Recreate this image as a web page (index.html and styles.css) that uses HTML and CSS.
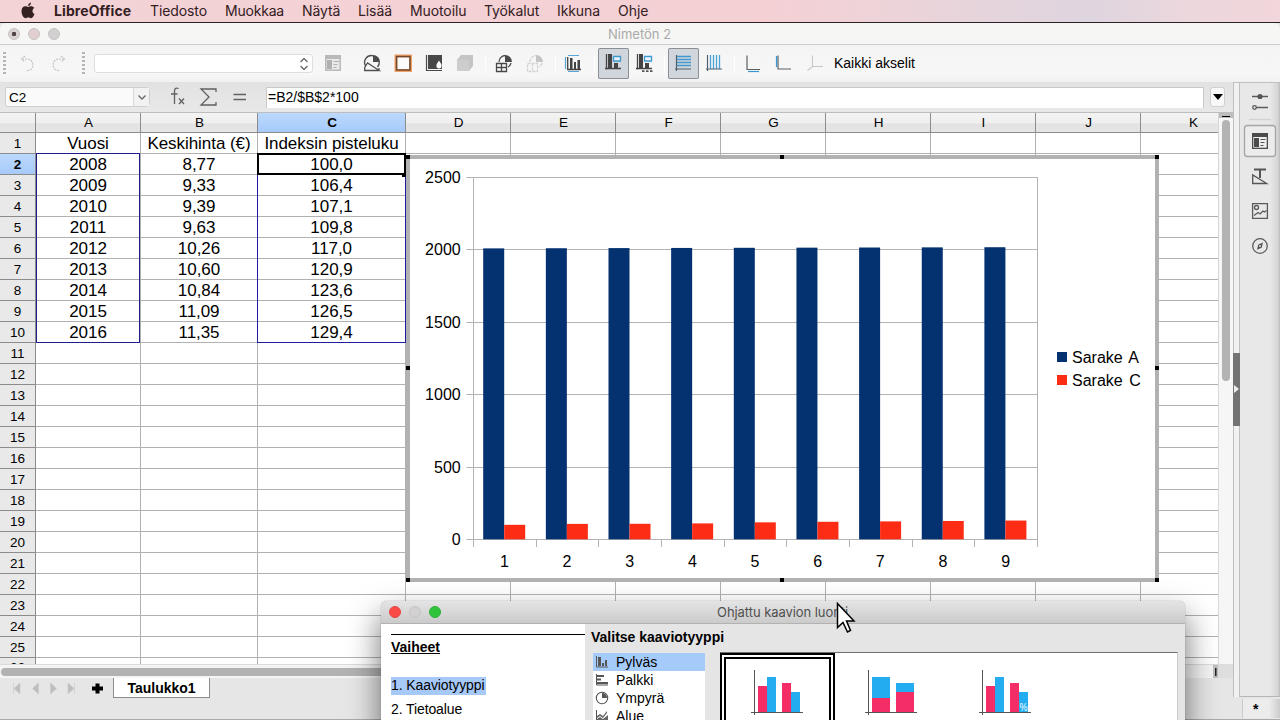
FILE: index.html
```html
<!DOCTYPE html>
<html lang="fi">
<head>
<meta charset="utf-8">
<title>Nimetön 2</title>
<link rel="stylesheet" href="styles.css">
</head>
<body>
<div class="screen">
  <nav class="menubar">
    <svg class="apple" width="14" height="17" viewBox="0 0 14 17"><path d="M10 .5C8.300.7 6.900 2.300 7.100 4 8.800 4 10.100 2.300 10 .5ZM7.200 5C6.400 5 5.500 4.300 4.400 4.300 2.200 4.300.5 6.200.5 9.200c0 3.300 2.100 7 4 7 1 0 1.500-.6 2.800-.6s1.700.6 2.700.6c1.600 0 2.900-2.400 3.500-4.100-2.600-1.200-2.600-4.800-.2-6.100C12.500 4.900 11.200 4.300 10.100 4.300 8.900 4.300 8 5 7.200 5Z"/></svg>
    <span class="m m-app">LibreOffice</span><span class="m m-file">Tiedosto</span><span class="m m-edit">Muokkaa</span><span class="m m-view">Näytä</span><span class="m m-insert">Lisää</span><span class="m m-format">Muotoilu</span><span class="m m-tools">Työkalut</span><span class="m m-window">Ikkuna</span><span class="m">Ohje</span>
  </nav>
  <header class="titlebar"><i class="light edited"></i><i class="light rosy"></i><i class="light"></i><span class="wtitle">Nimetön 2</span></header>

  <div class="toolbar">
    <i class="grip first"></i>
    <svg class="ic undo" width="31" height="31" viewBox="0 0 31 31"><path d="M10 11h6a6 6 0 0 1 2 11l-4 1M13 8l-3.500 3 3.500 3" fill="none" stroke="#c3c3c3" stroke-width="1.200" stroke-dasharray="2 1"/></svg>
    <svg class="ic" width="31" height="31" viewBox="0 0 31 31"><path d="M21 11h-6a6 6 0 0 0-2 11l4 1M18 8l3.500 3-3.500 3" fill="none" stroke="#c3c3c3" stroke-width="1.200" stroke-dasharray="2 1"/></svg>
    <i class="grip second"></i>
    <div class="combo"><svg width="10" height="14" viewBox="0 0 10 14"><path d="M1.500 5 5 1.500 8.500 5M1.500 9 5 12.500 8.500 9" fill="none" stroke="#6b6b6b" stroke-width="1.400"/></svg></div>
    <svg class="ic" width="31" height="31" viewBox="0 0 31 31"><path d="M7 7h16v16H7z" fill="#b9b9b9"/><path d="M8.500 11h13v10.500h-13z" fill="#e9e9e9"/><path d="M9 12h5v9H9z" fill="#b0b0b0"/><path d="M15.500 13.500h6M15.500 16.500h4M15.500 19.500h3" stroke="#b0b0b0"/></svg>
    <i class="gap"></i>
    <svg class="ic" width="31" height="31" viewBox="0 0 31 31"><path d="M8.700 18A6.800 6.800 0 0 1 16 7.700M22.300 14a6.800 6.800 0 0 1-1.800 5" fill="none" stroke="#505050" stroke-width="1.400"/><path d="M16 7a7 7 0 0 1 7 7h-7z" fill="#4a4a4a"/><path d="M10.500 15 7.700 19.500v3h14.500zM22 20v2.500" fill="none" stroke="#505050" stroke-width="1.300"/></svg>
    <svg class="ic" width="31" height="31" viewBox="0 0 31 31"><path d="M8 8h14.500v14.500H8z" fill="#fbfbfb" stroke="#f2a167" stroke-width="3"/><path d="M8.500 8.500h13.500v13.500h-13.500z" fill="none" stroke="#6f4b35" stroke-width="1.500"/></svg>
    <svg class="ic" width="31" height="31" viewBox="0 0 31 31"><path d="M7.500 7v15.500H23" fill="none" stroke="#484848" stroke-width="1.200"/><path d="M9 7h14v14H9z" fill="#484848"/><path d="M20 12.500c2 3 2.600 4 2.600 5.300a2.600 2.600 0 0 1-5.200 0C17.400 16.500 18 15.500 20 12.500Z" fill="#fff"/></svg>
    <svg class="ic" width="31" height="31" viewBox="0 0 31 31"><path d="M7 12l4-5h12v11l-4 5H7z" fill="#c4c4c4"/><path d="M7 11.500h12V23H7z" fill="#cdcdcd"/></svg>
    <i class="sep"></i>
    <svg class="ic" width="31" height="31" viewBox="0 0 31 31"><path d="M10 14a6.500 6.500 0 0 1 6-6.500M22 15a6.500 6.500 0 0 1-3 4" fill="none" stroke="#4a4a4a" stroke-width="1.300"/><path d="M16 7a7 7 0 0 1 7 7h-7z" fill="#484848"/><path d="M7.500 15.500h10v8h-10zM7.500 19.500h10M12.500 15.500v8" fill="#fafafa" stroke="#484848" stroke-width="1.300"/></svg>
    <svg class="ic" width="31" height="31" viewBox="0 0 31 31"><path d="M10 14a6.500 6.500 0 0 1 6-6.500M22 15a6.500 6.500 0 0 1-3 4M7.500 15.500h10v8h-10zM12.500 15.500v8" fill="none" stroke="#d3d3d3" stroke-width="1.300" stroke-dasharray="3 1"/><path d="M16 7a7 7 0 0 1 7 7h-7z" fill="#c4c4c4"/></svg>
    <i class="sep"></i>
    <svg class="ic" width="31" height="31" viewBox="0 0 31 31"><path d="M9 7.500h11M6.500 9v12M9 23.500h11" stroke="#59a5d4" stroke-width="1.200"/><path d="M8.700 9v12.500H22" fill="none" stroke="#444" stroke-width="1.300"/><path d="M11 10h2.500v11H11zM15 14h2v7h-2zM18.500 12H21v9h-2.500z" fill="#444"/></svg>
    <i class="sep"></i>
    <svg class="ic on" width="31" height="31" viewBox="0 0 31 31"><path d="M8.500 6v15.500M7 20.500h16" stroke="#444" stroke-width="1.300"/><path d="M10 6h4v14h-4zM16 15h4v5h-4z" fill="#444"/><path d="M15.500 8.500h7v4.500h-7z" fill="#e7f1f8" stroke="#3f99d0" stroke-width="1.300"/></svg>
    <svg class="ic" width="31" height="31" viewBox="0 0 31 31"><path d="M8.500 6v15.500M7 20.500h16" stroke="#444" stroke-width="1.300"/><path d="M10 6h4v14h-4zM16 15h4v5h-4z" fill="#444"/><path d="M15.500 8.500h7v4.500h-7z" fill="#eef6fb" stroke="#3f99d0" stroke-width="1.300"/><path d="M13 23.200h11" stroke="#555" stroke-width="1.800" stroke-dasharray="2.500 1.500"/></svg>
    <i class="sep"></i>
    <svg class="ic on" width="31" height="31" viewBox="0 0 31 31"><path d="M8 8.500h15M8 11.500h15M8 14.500h15M8 17.500h15" stroke="#4299d0" stroke-width="1.300"/><path d="M8.500 7v16M7 21h16" stroke="#51606b" stroke-width="1.200"/></svg>
    <svg class="ic" width="31" height="31" viewBox="0 0 31 31"><path d="M11.500 7v14M14.500 7v14M17.500 7v14M20.500 7v14" stroke="#4aa3d8" stroke-width="1.300"/><path d="M8.500 7v16M7 21h16" stroke="#51606b" stroke-width="1.200"/></svg>
    <i class="sep"></i>
    <svg class="ic" width="31" height="31" viewBox="0 0 31 31"><path d="M9 7.500v14H22" fill="none" stroke="#5b6267" stroke-width="1.200"/><path d="M10 23.500h11" stroke="#3c97d0" stroke-width="1.200"/></svg>
    <svg class="ic" width="31" height="31" viewBox="0 0 31 31"><path d="M9 7.500v13.500H22" fill="none" stroke="#5b6267" stroke-width="1.200"/><path d="M7.500 8v11" stroke="#3c97d0" stroke-width="1.200"/></svg>
    <svg class="ic" width="31" height="31" viewBox="0 0 31 31"><path d="M12.500 7.500V18.500H23M12.500 18.500l-5 4" fill="none" stroke="#c8c8c8" stroke-width="1.100"/></svg>
    <span class="axes">Kaikki akselit</span>
  </div>

  <div class="main">
    <section class="doc">
      <div class="formulabar">
        <div class="namebox"><span>C2</span><b><svg width="10" height="7" viewBox="0 0 10 7"><path d="M1.500 1.500 5 5l3.500-3.500" fill="none" stroke="#666" stroke-width="1.300"/></svg></b></div>
        <svg class="fxicons" width="78" height="22" viewBox="0 0 78 22"><path d="M8.500 2.500c-3-1-4 0-4 3V18M1 8h6.500M9 12.500l5 5.500M14 12.500 9 18" fill="none" stroke="#606060" stroke-width="1.300"/><path d="M46 6V3H31l8 8-8 8h15v-3" fill="none" stroke="#606060" stroke-width="1.300"/><path d="M63.500 8.500h12.500M63.500 13.500h12.500" stroke="#606060" stroke-width="1.400"/></svg>
        <div class="formula">=B2/$B$2*100</div>
        <div class="drop"><i></i></div>
      </div>
      <div class="sheetrow">
        <div class="sheet" id="sheet">
          <i class="range ra"></i><i class="range rc"></i><i class="active"><b></b></i>
          <svg class="chart" id="chart" width="753" height="427" viewBox="406 155 753 427"></svg>
        </div>
        <div class="vscroll"><i class="split"></i><i class="thumb"></i></div>
      </div>
      <div class="hscroll"><i class="hthumb"></i><i class="hsplit"></i></div>
      <div class="tabs">
        <svg width="100" height="20" viewBox="0 0 100 20"><path d="M13.500 5v11M38.500 5v11l-6-5.500zM50.500 5v11l6-5.500zM74.500 5v11M20 5v11l-6-5.500zM68 5v11l6-5.500z" fill="#bebebe" stroke="#cacaca" stroke-width=".7"/><path d="M97.500 5.500v10M92 10.500h11" stroke="#000" stroke-width="4"/></svg>
        <span class="tab">Taulukko1</span>
      </div>
    </section>
    <div class="divider"><i><b></b></i></div>
    <aside class="sidebar">
      <svg width="38" height="190" viewBox="1241 82 38 190">
        <g fill="none" stroke="#5b5b5b" stroke-width="1.300"><path d="M1252 96.500h16M1256 107.500h12"/><circle cx="1254.500" cy="107.500" r="1.800"/><path d="M1249 119.500h22" stroke="#d2d2d2"/>
        <rect x="1244.500" y="125.500" width="31" height="31" rx="3" fill="#ececec" stroke="#a5a5a5"/></g>
        <circle cx="1260" cy="96.500" r="2.600" fill="#555"/>
        <path d="M1252 133h16v16h-16z" fill="#4c4c4c"/><path d="M1253.300 137h13.400v10.700h-13.400z" fill="#efefef"/><path d="M1254 138h5v9h-5z" fill="#4c4c4c"/><path d="M1260.500 139.500h5M1260.500 142.500h4M1260.500 145.500h3" stroke="#555"/>
        <path d="M1254 169.500h12M1260 169v9" stroke="#555" stroke-width="2"/><path d="M1252.700 175v8.500h14z" fill="none" stroke="#555" stroke-width="1.300"/>
        <g fill="none" stroke="#5b5b5b" stroke-width="1.300"><path d="M1252.600 203.600h14.800v14.800h-14.800z"/><circle cx="1256.500" cy="207.500" r="2"/><path d="M1254 215.500l4-3 2 1.500 3-3 1.500 1 2-1.500"/><circle cx="1260" cy="246" r="7.300"/></g><path d="M1263 242.500l-1.300 5.200-4.700 2 1.300-5.200z" fill="#555"/><circle cx="1260" cy="246" r=".9" fill="#eee"/>
      </svg>
    </aside>
  </div>
  <footer class="status"><span>*</span></footer>

  <div class="dialog">
    <div class="dtitle"><i class="light red"></i><i class="light"></i><i class="light green"></i><span>Ohjattu kaavion luonti</span></div>
    <div class="dbody">
      <div class="steps"><h2>Vaiheet</h2><p class="cur"><span>1. Kaaviotyyppi</span></p><p>2. Tietoalue</p></div>
      <div class="pick">
        <h3>Valitse kaaviotyyppi</h3>
        <div class="cols">
          <ul class="types">
            <li class="sel"><svg width="14" height="14" viewBox="0 0 14 14"><path d="M1.500 1v11H13" fill="none" stroke="#555"/><path d="M3 2h3v9H3zM7 8h2v3H7zM10 5h2v6h-2z" fill="#555"/></svg>Pylväs</li>
            <li><svg width="14" height="14" viewBox="0 0 14 14"><path d="M1.500 1v11H13" fill="none" stroke="#555"/><path d="M2 2h7v2H2zM2 5.500h4v2H2zM2 9h11v2H2z" fill="#555"/></svg>Palkki</li>
            <li><svg width="14" height="14" viewBox="0 0 14 14"><circle cx="7" cy="7" r="5.700" fill="none" stroke="#555" stroke-width="1.100"/><path d="M7 2v5h5a5 5 0 0 0-5-5z" fill="#555"/></svg>Ympyrä</li>
            <li><svg width="14" height="14" viewBox="0 0 14 14"><path d="M1.500 1v12" stroke="#555"/><path d="M2 7l3-2 3 2 4-5v2L8 9 5 7 2 9zM2 10l3-2 3 2 5-4v7H2z" fill="#666"/></svg>Alue</li>
          </ul>
          <div class="subtypes">
            <div class="sub chosen"><svg width="50" height="50" viewBox="0 0 50 50"><path d="M4 19h9v26H4zM28 16h9v29h-9z" fill="#f52d66"/><path d="M13 10h9v35h-9zM37 25h9v20h-9z" fill="#23adf0"/><path d="M.5 3v45M-3 45.500h52" stroke="#555" fill="none"/></svg></div>
            <div class="sub"><svg width="50" height="50" viewBox="0 0 50 50"><path d="M4 31h18v14H4zM28 25h18v20H28z" fill="#f52d66"/><path d="M4 10h18v21H4zM28 16h18v9H28z" fill="#23adf0"/><path d="M.5 3v45M-3 45.500h52" stroke="#555" fill="none"/></svg></div>
            <div class="sub"><svg width="50" height="50" viewBox="0 0 50 50"><path d="M4 19h9v26H4zM28 16h9v29h-9z" fill="#f52d66"/><path d="M13 10h9v35h-9zM37 25h9v20h-9z" fill="#23adf0"/><path d="M.5 3v45M-3 45.500h52" stroke="#555" fill="none"/><text x="37.500" y="44" font-size="11" fill="#fff" textLength="8" lengthAdjust="spacingAndGlyphs">%</text></svg></div>
          </div>
        </div>
      </div>
    </div>
  </div>
  <svg class="cursor" width="20" height="33" viewBox="0 0 20 33"><path d="M1.500 1.500v24l5.500-5 4.500 9.500 3-1.500L10.500 19H18z" fill="#fff" stroke="#000" stroke-width="1.500"/></svg>
</div>
<script src="script.js"></script>
</body>
</html>
```
FILE: styles.css
```css
* { box-sizing: border-box; }
body { margin: 0; font-family: "Liberation Sans", Arial, sans-serif; color: #000; }
i, b { font-style: normal; display: block; }
.screen { position: relative; width: 1280px; height: 720px; overflow: hidden; background: #e6e6e6; display: flex; flex-direction: column; }

.menubar { height: 23px; flex: none; display: flex; align-items: center; padding-bottom: 1px; border-bottom: 1px solid #2b2024; background: linear-gradient(90deg, #f3d3d6 0, #f4d0d4 60%, #eed3d8 68%, #ded5df 85%, #ecd7dc 93%, #f1d6db 100%); font: 14px Inter, sans-serif; color: #33201f; }
.apple { margin: -1px 19px 0 21px; fill: #33201f; }
.m { white-space: nowrap; flex: none; }
.m-app { width: 96px; font-weight: 700; letter-spacing: .1px; }
.m-file { width: 75px; letter-spacing: -.1px; }
.m-edit { width: 77px; letter-spacing: -.2px; }
.m-view { width: 56px; letter-spacing: -.1px; }
.m-insert { width: 52px; letter-spacing: -.1px; }
.m-format { width: 74px; letter-spacing: -.1px; }
.m-tools { width: 73px; letter-spacing: -.1px; }
.m-window { width: 61px; letter-spacing: -.1px; }

.titlebar { height: 22px; flex: none; display: flex; align-items: center; gap: 8px; padding-left: 8px; background: #f6f6f5; border-bottom: 1px solid #cdcdcd; border-radius: 6px 6px 0 0; }
.light { width: 12px; height: 12px; border-radius: 50%; background: #d2d0d0; border: 1px solid #c6c4c4; flex: none; }
.rosy { background: #e2cfcf; }
.edited { background: radial-gradient(circle, #4e4747 0 2px, #dcd2d2 2.500px); }
.wtitle { margin-left: 540px; font: 13px Inter, sans-serif; color: #aaa; }

.toolbar { height: 37px; flex: none; display: flex; align-items: center; background: linear-gradient(#f4f4f4, #f7f7f7 80%, #f1f1f1); }
.grip { width: 3px; height: 23px; background: repeating-linear-gradient(#b5b5b5 0 2.500px, transparent 2.500px 4px); flex: none; }
.first { margin: 0 6px 0 3px; }
.second { margin: 0 9px 0 8px; }
.ic { flex: none; }
.on { background: #d1d5dc; box-shadow: inset 0 0 0 1px #8b8f95; border-radius: 2px; }
.combo { width: 219px; height: 19px; margin-right: 5px; background: #fff; border: 1px solid #dedede; border-radius: 3px; display: flex; align-items: center; justify-content: flex-end; padding-right: 3px; flex: none; }
.gap, .sep { width: 8px; height: 16px; flex: none; }
.sep { background: linear-gradient(#fff, #fff) 4px 0 / 1px 100% no-repeat; }
.axes { margin-left: 3px; font-size: 14px; letter-spacing: 0; white-space: nowrap; margin-top: -1px; }

.main { height: 616px; flex: none; display: flex; }
.doc { width: 1233px; flex: none; display: flex; flex-direction: column; }
.formulabar { height: 31px; flex: none; display: flex; align-items: center; background: linear-gradient(#e2e2e2, #e8e8e8); border-bottom: 1px solid #bdbdbd; }
.namebox { margin-left: 5px; width: 145px; height: 20px; background: #fafafa; border: 1px solid #cfcfcf; border-radius: 2px 4px 4px 2px; display: flex; justify-content: space-between; font-size: 13.500px; line-height: 19px; padding-left: 3px; }
.namebox b { width: 16px; height: 18px; background: #f2f2f2; border-left: 1px solid #d9d9d9; display: flex; align-items: center; justify-content: center; }
.fxicons { margin-left: 20px; }
.formula { margin-left: 18px; width: 938px; height: 21px; background: #fff; border: 1px solid #c9c9c9; border-width: 1px 1px 0 1px; font-size: 14px; letter-spacing: 0; line-height: 19px; padding-left: 1px; margin-top: 1px; }
.drop { margin-left: 6px; width: 15px; height: 20px; background: #f8f8f8; border: 1px solid #d0d0d0; border-radius: 3px; display: flex; align-items: center; justify-content: center; }
.drop i { flex: none; border: 5px solid transparent; border-top: 6px solid #000; border-bottom: 0; }

.sheetrow { height: 551px; flex: none; display: flex; }
.sheet { position: relative; width: 1218px; height: 551px; overflow: hidden; background: #fff; }
.row { display: grid; grid-template-columns: 36px 105px 117px 148px repeat(7, 105px) 105px; height: 21px; }
.row > span { border: 0 solid #b1b1b1; border-width: 0 1px 1px 0; text-align: center; font-size: 17px; line-height: 21px; letter-spacing: -.05px; white-space: nowrap; overflow: hidden; }
.row > span.hd { font-size: 13.500px; line-height: 21px; background: #e9e9e9; border-color: #8c8c8c; letter-spacing: 0; }
.row:nth-child(27) > span.hd { line-height: 19px; }
.row.head { height: 20px; }
.row.head > span.hd { padding-left: 1px; line-height: 20px; background: linear-gradient(#f3f3f3, #efefef 50%, #e2e2e2 60%, #e6e6e6); }
.row > span.hl, .row.head > span.hl { font-weight: 700; background: linear-gradient(#bcd9fc, #a6cafa); }
.range { position: absolute; top: 40px; height: 190px; border: 1px solid #1f1c8b; }
.ra { left: 36px; width: 104px; }
.rc { left: 257px; width: 149px; border-color: #1f1ca0; }
.active { position: absolute; left: 257px; top: 40px; width: 149px; height: 22px; border: 2px solid #000; }
.active b { position: absolute; right: -2px; bottom: -4px; width: 4px; height: 4px; background: #000; }
.chart { position: absolute; left: 406px; top: 42px; }
.vscroll { width: 15px; background: #f6f6f6; border-left: 1px solid #d8d8d8; display: flex; flex-direction: column; align-items: center; }
.split { width: 14px; height: 5px; background: #bdbdbd; border-bottom: 0; display: flex; }
.split::after { content: ""; width: 8px; height: 1px; margin: 3px 3px; background: #000; }
.thumb { margin-top: 2px; width: 8px; height: 261px; border-radius: 4px; background: #b3b3b3; }

.hscroll { height: 14px; flex: none; background: linear-gradient(90deg, #f4f4f4 1218px, #dedede 1218px); display: flex; align-items: center; justify-content: space-between; padding: 0 15px 0 1px; border-top: 1px solid #dcdcdc; }
.hthumb { width: 1180px; height: 8px; margin-top: 0; border-radius: 4px; background: #b2b2b2; }
.hsplit { width: 5px; height: 14px; background: linear-gradient(#222, #222) 2px 3px / 1.500px 8px no-repeat #bdbdbd; }
.tabs { height: 21px; flex: none; display: flex; border-bottom: 1px solid #b5b5b5; background: #e6e6e6; }
.tabs svg { overflow: visible; }
.tab { margin-left: 13px; width: 97px; height: 20px; background: #fff; border: 1px solid #8d8d8d; border-top: 0; text-align: center; font-weight: 700; font-size: 14px; letter-spacing: 0; line-height: 20px; }

.divider { width: 7px; height: 615px; background: #f1f1f1; border: 1px solid #c0c0c0; border-width: 1px 1px 0 1px; flex: none; }
.divider i { margin: 270px 0 0 -1px; width: 7px; height: 73px; background: #737373; padding: 32px 0 0 1px; }
.divider b { border: 4px solid transparent; border-left: 5px solid #eee; border-right: 0; width: 0; height: 0; }
.sidebar { flex: 1; height: 615px; padding-left: 1px; border-top: 1px solid #c0c0c0; border-bottom: 1px solid #b5b5b5; background: linear-gradient(90deg, #e8e8e8 75%, #d6d6d6 94%, #bcbcbc); }
.sidebar svg { display: block; margin-top: -1px; }
.status { flex: 1; display: flex; justify-content: flex-end; background: #e6e6e6; border-bottom: 1px solid #aaa; }
.status span { width: 38px; height: 19px; margin-top: 1px; border-left: 1px solid #c9c9c9; padding-left: 10px; font-size: 14px; font-weight: 700; line-height: 20px; background: linear-gradient(90deg, #ececec 70%, #ccc); }

.dialog { position: absolute; left: 381px; top: 601px; width: 804px; height: 130px; border-radius: 6px 6px 0 0; background: #e5e5e5; overflow: visible; box-shadow: 0 16px 30px 2px rgba(0, 0, 0, .5), 0 0 1px rgba(0, 0, 0, .5); }
.dtitle { height: 23px; border-radius: 6px 6px 0 0; background: linear-gradient(#e4e4e4, #cbcbcb); border-bottom: 1px solid #b2b2b2; display: flex; align-items: center; gap: 8px; padding-left: 8px; }
.dtitle span { margin-left: 268px; font: 13px Inter, sans-serif; letter-spacing: -.06px; color: #505050; white-space: nowrap; }
.light.red { background: #fb4b47; border-color: #ea4542; }
.light.green { background: #30c43b; border-color: #2bb234; }
.dbody { display: flex; height: 107px; }
.steps { width: 204px; padding: 10px 0 0 10px; background: #fff; flex: none; font-size: 14px; }
.steps h2 { margin: 0; border-top: 1px solid #000; padding-top: 4px; height: 43px; font-size: 14px; letter-spacing: 0; line-height: 16px; text-decoration: underline; }
.steps p { margin: 0 0 6px; height: 18px; line-height: 17px; letter-spacing: -.1px; }
.cur span { display: inline-block; height: 18px; background: #a7c9f7; width: 95px; }
.pick { flex: 1; padding: 5px 7px 0 6px; }
.pick h3 { margin: 0; font-size: 14px; line-height: 16px; height: 23px; letter-spacing: 0; }
.cols { display: flex; padding-left: 2px; }
.types { margin: 1px 15px 0 0; padding: 0; width: 112px; height: 90px; background: #fff; list-style: none; font-size: 14px; }
.types li { height: 18px; line-height: 19px; display: flex; align-items: center; padding-left: 2px; gap: 7px; }
.types .sel { background: #a5cbfb; }
.subtypes { width: 458px; height: 90px; display: flex; background: #fff; border: 1px solid #707070; border-width: 1px 1px 0 0; border-right-color: #ccc; }
.sub { width: 114px; height: 90px; padding: 14px 0 0 33px; }
.sub svg { display: block; overflow: visible; }
.chosen { border: 6px double #000; width: 115px; padding: 8px 0 0 28px; }
.cursor { position: absolute; left: 836px; top: 602px; }
```
FILE: script.js
```js
const data = [
  ['Vuosi', 'Keskihinta (€)', 'Indeksin pisteluku'],
  ['2008', '8,77', '100,0'], ['2009', '9,33', '106,4'], ['2010', '9,39', '107,1'],
  ['2011', '9,63', '109,8'], ['2012', '10,26', '117,0'], ['2013', '10,60', '120,9'],
  ['2014', '10,84', '123,6'], ['2015', '11,09', '126,5'], ['2016', '11,35', '129,4']
];
let rows = '<div class="row head"><span class="hd"></span>';
for (const c of 'ABCDEFGHIJK') rows += `<span class="hd${c === 'C' ? ' hl' : ''}">${c}</span>`;
rows += '</div>';
for (let r = 1; r <= 26; r++) {
  rows += `<div class="row"><span class="hd${r === 2 ? ' hl' : ''}">${r}</span>`;
  for (let c = 0; c < 11; c++) rows += `<span>${(data[r - 1] || [])[c] || ''}</span>`;
  rows += '</div>';
}
document.getElementById('sheet').insertAdjacentHTML('afterbegin', rows);

// Bar chart of columns A and C
const left = 473.5, base = 539.7, unit = 362.2 / 2500, step = 62.65;
let s = '<rect x="408" y="157" width="749" height="423" fill="#fff" stroke="#b2b2b2" stroke-width="4"/>';
for (let v = 0; v <= 2500; v += 500) {
  const y = Math.floor(base - v * unit) + .5;
  s += `<path d="M466.500 ${y}H1037.500" stroke="#b3b3b3"/><text x="460.700" y="${y + 5.8}" text-anchor="end">${v}</text>`;
}
for (let i = 0; i <= 9; i++) {
  const x = Math.floor(left + i * step) + .5;
  s += `<path d="M${x} 540v7" stroke="#b3b3b3"/>`;
}
s += '<path d="M473.500 177V540M1037.500 177V540" stroke="#b3b3b3"/>';
for (let i = 0; i < 9; i++) {
  const x = 483.2 + i * step, a = +data[i + 1][0] * unit, c = parseFloat(data[i + 1][2].replace(',', '.')) * unit;
  s += `<rect x="${x}" y="${base - a - .4}" width="21" height="${a}" fill="#04316f"/>`;
  s += `<rect x="${x + 21}" y="${base - c - .4}" width="21" height="${c}" fill="#fd2c14"/>`;
  s += `<text x="${x + 21.2}" y="566.500" text-anchor="middle">${i + 1}</text>`;
}
s += '<rect x="1057" y="352" width="10" height="10" fill="#04316f"/><text x="1072" y="363" class="legend" word-spacing="2">Sarake A</text>';
s += '<rect x="1057" y="375" width="10" height="10" fill="#fd2c14"/><text x="1072" y="386" class="legend" word-spacing="2">Sarake C</text>';
for (const [x, y] of [[406, 155], [780, 155], [1155, 155], [406, 366], [1155, 366], [406, 578], [780, 578], [1155, 578]])
  s += `<rect x="${x}" y="${y}" width="4" height="4"/>`;
document.getElementById('chart').innerHTML = s;
```
